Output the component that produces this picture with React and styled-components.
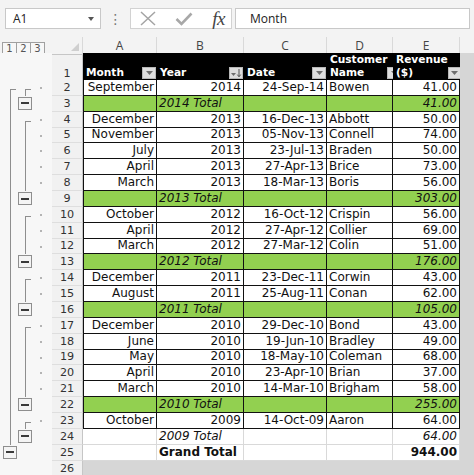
import React from 'react';
import styled, { createGlobalStyle, css } from 'styled-components';

// spreadsheet with outline (grouped subtotals) - Excel look

const GlobalStyle = createGlobalStyle`
  html, body {
    margin: 0;
    padding: 0;
    background: #fff;
  }
  body {
    width: 474px;
    height: 475px;
    overflow: hidden;
    font-family: "DejaVu Sans", Verdana, sans-serif;
  }
`;

const COLS = '52px 31px 74px 87px 83px 66px 67px 1fr';
const ROW_H = 15.87;
const DARK = '#111';
const GRID = '#d9d9d9';
const RAIL = '#8e8e8e';

/* ---------- formula bar ---------- */

const FormulaBar = styled.div`
  display: flex;
  align-items: center;
  height: 37px;
  padding-left: 5px;
  background: #f3f3f3;
  box-sizing: border-box;
`;

const NameBox = styled.div`
  width: 96px;
  height: 21px;
  box-sizing: border-box;
  background: #fff;
  border: 1px solid #c8c8c8;
  display: flex;
  align-items: center;
  justify-content: space-between;
  padding: 0 6px 0 7px;
  font: 12px "Open Sans", sans-serif;
  color: #222;
`;

const Caret = styled.span`
  width: 0;
  height: 0;
  border-left: 3.5px solid transparent;
  border-right: 3.5px solid transparent;
  border-top: 4px solid #555;
`;

const Grip = styled.span`
  width: 29px;
  text-align: center;
  font: 14px "DejaVu Sans", sans-serif;
  color: #777;
`;

const FxBox = styled.div`
  width: 102px;
  height: 21px;
  box-sizing: border-box;
  background: #fff;
  border: 1px solid #d2d2d2;
  display: flex;
  align-items: center;
  justify-content: space-between;
  padding: 0 6px 0 9px;
`;

const FxLabel = styled.span`
  font: italic 19px "Liberation Serif", serif;
  color: #444;
  letter-spacing: -0.5px;
  line-height: 19px;
`;

const Input = styled.div`
  margin-left: 3px;
  width: 235px;
  height: 21px;
  box-sizing: border-box;
  background: #fff;
  border: 1px solid #c8c8c8;
  display: flex;
  align-items: center;
  padding-left: 14px;
  font: 12px "Open Sans", sans-serif;
  color: #222;
`;

/* ---------- grid ---------- */

const Sheet = styled.div`
  display: flex;
  flex-direction: column;
`;

const Row = styled.div`
  display: grid;
  grid-template-columns: ${COLS};
  height: ${p => p.$h}px;
`;

const Gutter = styled.div`
  display: flex;
  background: #f7f7f7;
`;

const Lane = styled.div`
  position: relative;
  flex: none;
  width: ${p => p.$w}px;
`;

const Rail = styled.span`
  position: absolute;
  left: ${p => p.$x}px;
  top: ${p => (p.$start ? 9 : 0)}px;
  bottom: 0;
  width: 1px;
  background: ${RAIL};
  ${p => p.$start && css`
    &::after {
      content: '';
      position: absolute;
      left: 0;
      top: 0;
      width: 6px;
      height: 1px;
      background: ${RAIL};
    }
  `}
`;

const Collapse = styled.span`
  position: absolute;
  left: ${p => p.$x}px;
  top: 1px;
  width: 14px;
  height: 13px;
  box-sizing: border-box;
  border: 1px solid ${RAIL};
  background: #f4f4f4;
  display: flex;
  align-items: center;
  justify-content: center;

  &::before {
    content: '';
    width: 8px;
    height: 2px;
    background: #3a3a3a;
  }
`;

const Dot = styled.span`
  position: absolute;
  left: 6px;
  top: 7px;
  width: 2px;
  height: 2px;
  background: #b4b4b4;
`;

const Levels = styled.div`
  display: flex;
  align-items: flex-end;
  padding: 0 0 1px 2px;
  background: #f3f3f3;
`;

const LevelBtn = styled.span`
  width: 15px;
  height: 12px;
  box-sizing: border-box;
  border: 1px solid #a0a0a0;
  margin-right: -1px;
  background: #f7f7f7;
  display: flex;
  align-items: center;
  justify-content: center;
  font: 10px "DejaVu Sans", sans-serif;
  color: #555;
`;

const Corner = styled.div`
  position: relative;
  background: #f3f3f3;
  border-right: 1px solid ${GRID};
  border-bottom: 1px solid #c6c6c6;

  &::after {
    content: '';
    position: absolute;
    right: 3px;
    bottom: 3px;
    border-left: 8px solid transparent;
    border-bottom: 8px solid #cfcfcf;
  }
`;

const ColHead = styled.div`
  background: #f3f3f3;
  border-right: 1px solid ${GRID};
  border-bottom: 1px solid #c6c6c6;
  display: flex;
  align-items: center;
  justify-content: center;
  font: 12px "Open Sans", sans-serif;
  color: #444;
`;

const RowHead = styled.div`
  background: #f1f1f1;
  border-right: 1px solid #c6c6c6;
  border-bottom: 1px solid #dedede;
  box-sizing: border-box;
  display: flex;
  align-items: flex-end;
  justify-content: center;
  padding-bottom: 1px;
  font-size: 11.2px;
  color: #333;
`;

const Filler = styled.div`
  background: ${p => (p.$light ? '#f3f3f3' : '#d6d6d6')};
  ${p => p.$span && css`grid-column: 3 / -1;`}
`;

const HeadCell = styled.div`
  background: #000;
  color: #fff;
  font-weight: 700;
  font-size: 10.6px;
  line-height: 13px;
  display: flex;
  align-items: flex-end;
  justify-content: space-between;
  padding: 0 1px 3px 3px;
  box-sizing: border-box;
`;

const FilterBtn = styled.span`
  flex: none;
  width: 14px;
  height: 12px;
  box-sizing: border-box;
  background: #dedede;
  border: 1px solid #b8b8b8;
  display: flex;
  align-items: center;
  justify-content: center;
`;

const Cell = styled.div`
  box-sizing: border-box;
  display: flex;
  align-items: flex-end;
  justify-content: ${p => (p.$right ? 'flex-end' : 'flex-start')};
  padding: 0 2px 1px 2px;
  font-size: 12px;
  line-height: 14px;
  color: #111;
  white-space: nowrap;
  overflow: hidden;
  font-style: ${p => (p.$italic ? 'italic' : 'normal')};
  font-weight: ${p => (p.$bold ? 700 : 400)};
  background: ${p => (p.$tone === 'green' ? '#92d050' : '#fff')};
  border-right: ${p => (p.$tone === 'plain' ? `1px solid ${GRID}` : `1.5px solid ${DARK}`)};
  border-bottom: 1px solid ${p => (p.$tone === 'plain' ? GRID : DARK)};
  ${p => p.$first && p.$tone !== 'plain' && css`border-left: 1.5px solid ${DARK};`}
`;

/* ---------- icons ---------- */

const CrossIcon = () => (
  <svg width="16" height="15" viewBox="0 0 16 15">
    <path d="M1 1 L15 14 M15 1 L1 14" stroke="#a4a4a4" strokeWidth="1.5" fill="none" />
  </svg>
);

const CheckIcon = () => (
  <svg width="18" height="14" viewBox="0 0 18 14">
    <path d="M1.5 7 L6.5 12 L16.5 1.5" stroke="#a8a8a8" strokeWidth="2.6" fill="none" />
  </svg>
);

const DownTri = () => (
  <svg width="7" height="4" viewBox="0 0 7 4">
    <path d="M0 0 H7 L3.5 4 Z" fill="#6e6e6e" />
  </svg>
);

const SortIcon = () => (
  <svg width="12" height="10" viewBox="0 0 12 10">
    <path d="M1 5 H6 L3.5 8 Z" fill="#6e6e6e" />
    <path d="M9 1 V8.5" stroke="#555" strokeWidth="1" />
    <path d="M7.3 6.6 L9 8.8 L10.7 6.6" stroke="#555" strokeWidth="1" fill="none" />
  </svg>
);

/* ---------- data ---------- */

const rows = [
  { n: 2, k: 'd', v: ['September', '2014', '24-Sep-14', 'Bowen', '41.00'] },
  { n: 3, k: 't', v: ['', '2014 Total', '', '', '41.00'] },
  { n: 4, k: 'd', v: ['December', '2013', '16-Dec-13', 'Abbott', '50.00'] },
  { n: 5, k: 'd', v: ['November', '2013', '05-Nov-13', 'Connell', '74.00'] },
  { n: 6, k: 'd', v: ['July', '2013', '23-Jul-13', 'Braden', '50.00'] },
  { n: 7, k: 'd', v: ['April', '2013', '27-Apr-13', 'Brice', '73.00'] },
  { n: 8, k: 'd', v: ['March', '2013', '18-Mar-13', 'Boris', '56.00'] },
  { n: 9, k: 't', v: ['', '2013 Total', '', '', '303.00'] },
  { n: 10, k: 'd', v: ['October', '2012', '16-Oct-12', 'Crispin', '56.00'] },
  { n: 11, k: 'd', v: ['April', '2012', '27-Apr-12', 'Collier', '69.00'] },
  { n: 12, k: 'd', v: ['March', '2012', '27-Mar-12', 'Colin', '51.00'] },
  { n: 13, k: 't', v: ['', '2012 Total', '', '', '176.00'] },
  { n: 14, k: 'd', v: ['December', '2011', '23-Dec-11', 'Corwin', '43.00'] },
  { n: 15, k: 'd', v: ['August', '2011', '25-Aug-11', 'Conan', '62.00'] },
  { n: 16, k: 't', v: ['', '2011 Total', '', '', '105.00'] },
  { n: 17, k: 'd', v: ['December', '2010', '29-Dec-10', 'Bond', '43.00'] },
  { n: 18, k: 'd', v: ['June', '2010', '19-Jun-10', 'Bradley', '49.00'] },
  { n: 19, k: 'd', v: ['May', '2010', '18-May-10', 'Coleman', '68.00'] },
  { n: 20, k: 'd', v: ['April', '2010', '23-Apr-10', 'Brian', '37.00'] },
  { n: 21, k: 'd', v: ['March', '2010', '14-Mar-10', 'Brigham', '58.00'] },
  { n: 22, k: 't', v: ['', '2010 Total', '', '', '255.00'] },
  { n: 23, k: 'd', v: ['October', '2009', '14-Oct-09', 'Aaron', '64.00'] },
  { n: 24, k: 'p', v: ['', '2009 Total', '', '', '64.00'] },
  { n: 25, k: 'g', v: ['', 'Grand Total', '', '', '944.00'] },
];

const groupStarts = [2, 4, 10, 14, 17, 23];
const groupEnds = [3, 9, 13, 16, 22, 24];

const Outline = ({ n, detail }) => {
  const l1 = n === 2 ? 'start' : n === 25 ? 'btn' : 'line';
  const l2 = groupStarts.includes(n) ? 'start' : groupEnds.includes(n) ? 'btn' : n === 25 ? null : 'line';
  return (
    <Gutter>
      <Lane $w={18}>
        {l1 === 'btn' ? <Collapse $x={3} /> : <Rail $x={10} $start={l1 === 'start'} />}
      </Lane>
      <Lane $w={16}>
        {l2 === 'btn' && <Collapse $x={0} />}
        {(l2 === 'line' || l2 === 'start') && <Rail $x={7} $start={l2 === 'start'} />}
      </Lane>
      <Lane $w={18}>{detail && <Dot />}</Lane>
    </Gutter>
  );
};

const align = [true, true, true, false, true];

const DataRow = ({ row }) => {
  const tone = row.k === 't' ? 'green' : row.k === 'p' || row.k === 'g' ? 'plain' : 'white';
  return (
    <Row $h={ROW_H}>
      <Outline n={row.n} detail={row.k === 'd'} />
      <RowHead>{row.n}</RowHead>
      {row.v.map((text, i) => {
        const label = row.k !== 'd' && i === 1;
        return (
          <Cell
            key={i}
            $first={i === 0}
            $tone={tone}
            $right={label ? false : align[i]}
            $italic={row.k === 't' || row.k === 'p'}
            $bold={row.k === 'g'}
          >
            {text}
          </Cell>
        );
      })}
      <Filler />
    </Row>
  );
};

const App = () => (
  <>
    <GlobalStyle />
    <FormulaBar>
      <NameBox>
        A1
        <Caret />
      </NameBox>
      <Grip>⋮</Grip>
      <FxBox>
        <CrossIcon />
        <CheckIcon />
        <FxLabel>fx</FxLabel>
      </FxBox>
      <Input>Month</Input>
    </FormulaBar>

    <Sheet>
      <Row $h={16}>
        <Levels>
          <LevelBtn>1</LevelBtn>
          <LevelBtn>2</LevelBtn>
          <LevelBtn>3</LevelBtn>
        </Levels>
        <Corner />
        {['A', 'B', 'C', 'D', 'E'].map(l => (
          <ColHead key={l}>{l}</ColHead>
        ))}
        <Filler $light />
      </Row>

      <Row $h={27}>
        <Gutter />
        <RowHead>1</RowHead>
        <HeadCell>
          <span>Month</span>
          <FilterBtn><DownTri /></FilterBtn>
        </HeadCell>
        <HeadCell>
          <span>Year</span>
          <FilterBtn><SortIcon /></FilterBtn>
        </HeadCell>
        <HeadCell>
          <span>Date</span>
          <FilterBtn><DownTri /></FilterBtn>
        </HeadCell>
        <HeadCell>
          <span>Customer<br />Name</span>
          <FilterBtn><DownTri /></FilterBtn>
        </HeadCell>
        <HeadCell>
          <span>Revenue<br />($)</span>
          <FilterBtn><DownTri /></FilterBtn>
        </HeadCell>
        <Filler />
      </Row>

      {rows.map(r => (
        <DataRow key={r.n} row={r} />
      ))}

      <Row $h={16}>
        <Gutter />
        <RowHead>26</RowHead>
        <Filler $span />
      </Row>
    </Sheet>
  </>
);

export default App;
